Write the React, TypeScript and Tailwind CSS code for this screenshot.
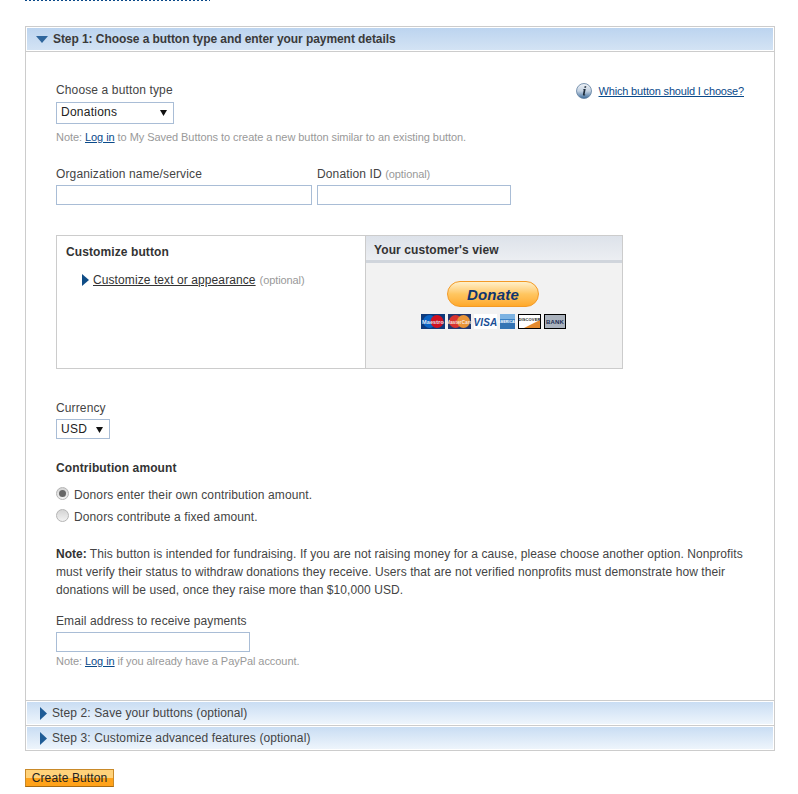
import React from "react";

const Down = () => (
  <svg width="12" height="7" viewBox="0 0 12 7" className="shrink-0">
    <path d="M0 0H12L6 7Z" fill="#2f669c" />
  </svg>
);
const Right = () => (
  <svg width="7" height="13" viewBox="0 0 7 13" className="shrink-0">
    <path d="M0 0L7 6.5L0 13Z" fill="#1f5c96" />
  </svg>
);

const Select = ({ value, className }: { value: string; className: string }) => (
  <div className={`flex items-center justify-between border border-[#a9bdd6] bg-white pl-[4px] pr-[6px] text-[#222] tracking-[0.25px] ${className}`}>
    <span>{value}</span>
    <svg width="7" height="7" viewBox="0 0 7 7"><path d="M0 1H7L3.5 7Z" fill="#111" /></svg>
  </div>
);

const Info = () => (
  <svg width="16" height="16" viewBox="0 0 16 16" className="shrink-0">
    <defs>
      <linearGradient id="ig" x1="0" y1="0" x2="0" y2="1">
        <stop offset="0" stopColor="#f1f4f8" />
        <stop offset="0.5" stopColor="#c4d2e2" />
        <stop offset="1" stopColor="#3d6c9b" />
      </linearGradient>
    </defs>
    <circle cx="8" cy="8" r="7.5" fill="url(#ig)" stroke="#5f7f9f" strokeWidth="0.8" />
    <path d="M8.6 3.2h1.7l-.3 1.5H8.3ZM7.9 6h1.8l-1.1 5.2c-.1.4.2.5.7.3l-.2.7c-1 .5-2.3.5-2.2-.7l.8-4.4-.8-.1Z" fill="#1d2b3a" />
  </svg>
);

const Radio = ({ on }: { on?: boolean }) => (
  <span className="flex items-center justify-center w-[13px] h-[13px] -mt-[3px] rounded-full border border-[#b5b5b5] bg-linear-to-b from-[#d4d4d4] to-[#f2f2f2] shrink-0">
    {on && <span className="block w-[7px] h-[7px] rounded-full bg-[#666]" />}
  </span>
);

const Cards = () => (
  <svg width="146" height="16" viewBox="0 0 146 16" className="block">
    <rect x="0" y="0" width="24" height="15" fill="#0d3a7c" />
    <circle cx="8.5" cy="7.5" r="6.5" fill="#0a63c4" />
    <circle cx="16" cy="7.5" r="6.5" fill="#cf1020" />
    <text x="12" y="9.5" fontSize="5.5" fontWeight="700" fill="#dfe8f5" textAnchor="middle" fontFamily="Liberation Sans">Maestro</text>
    <rect x="27" y="0" width="23" height="15" fill="#22386f" />
    <circle cx="34.5" cy="7.5" r="6.5" fill="#d8332f" />
    <circle cx="42.5" cy="7.5" r="6.5" fill="#e89437" />
    <text x="38.5" y="9.5" fontSize="4.6" fontWeight="700" fill="#f5e6e0" textAnchor="middle" fontFamily="Liberation Sans">MasterCard</text>
    <rect x="53" y="0" width="23" height="15" fill="#ffffff" />
    <text x="64.5" y="11.5" fontSize="10" fontWeight="700" fontStyle="italic" fill="#1a4f96" textAnchor="middle" fontFamily="Liberation Sans">VISA</text>
    <rect x="79" y="0" width="15" height="15" fill="#3b82c6" />
    <rect x="79" y="0" width="15" height="5" fill="#7db3e2" />
    <rect x="79" y="9" width="15" height="6" fill="#3474b4" />
    <text x="86.5" y="8.5" fontSize="3.4" fontWeight="700" fill="#ffffff" textAnchor="middle" fontFamily="Liberation Sans">AMERICAN</text>
    <rect x="97.5" y="0.5" width="22" height="14" fill="#ffffff" stroke="#000" />
    <path d="M103 14L119 6V14Z" fill="#e58a2d" />
    <text x="108.5" y="6.5" fontSize="4" fontWeight="700" fill="#222" textAnchor="middle" fontFamily="Liberation Sans">DISCOVER</text>
    <rect x="123.5" y="0.5" width="21" height="14" fill="#aab2bd" stroke="#000" />
    <text x="134" y="9.8" fontSize="6" fontWeight="700" fill="#1e2f55" textAnchor="middle" fontFamily="Liberation Sans">BANK</text>
  </svg>
);

const Lnk = ({ children }: { children: React.ReactNode }) => (
  <a className="text-[#0a4a8a] underline">{children}</a>
);

const Field = ({ className }: { className: string }) => (
  <input className={`block h-[20px] border border-[#a9bdd6] bg-white ${className}`} />
);

const Collapsed = ({ label }: { label: string }) => (
  <div className="p-[1px] border-t border-[#ccc] h-[25px]">
    <div className="h-full flex items-center gap-[5px] pl-[13px] bg-linear-to-b from-[#c9ddf3] to-[#eef5fc] text-[#444] tracking-[0.11px]">
      <Right />
      <span>{label}</span>
    </div>
  </div>
);

export default function App() {
  return (
    <div className="w-[798px] h-[794px] bg-white overflow-hidden font-['Liberation_Sans',Arial,sans-serif] text-[12px] leading-[18px] text-[#444]">
      <div className="ml-[25px] w-[185px] h-px bg-[repeating-linear-gradient(90deg,#0a4a8a_0,#0a4a8a_2px,transparent_2px,transparent_4px)]" />
      <div className="ml-[25px] mt-[25px] w-[750px] border border-[#ccc]">
        <div className="p-[1px] border-b border-[#ccc] h-[25px]">
          <div className="h-full flex items-center gap-[5px] pl-[9px] bg-linear-to-b from-[#bcd4ef] to-[#d3e3f4] font-bold text-[#3a3a3a] tracking-[-0.07px]">
            <Down />
            <span>Step 1: Choose a button type and enter your payment details</span>
          </div>
        </div>

        <div className="px-[30px] pt-[29px] h-[648px] tracking-[0.13px]">
          <div className="flex justify-between">
            <div>
              <div className="h-[18px]">Choose a button type</div>
              <Select value="Donations" className="w-[118px] h-[22px] mt-[3px] pb-[2px]" />
            </div>
            <div className="flex items-center gap-[7px] h-[20px] text-[11px] tracking-[-0.17px]">
              <Info />
              <Lnk>Which button should I choose?</Lnk>
            </div>
          </div>
          <div className="mt-[4px] text-[11px] text-[#999] tracking-[-0.06px]">
            Note: <Lnk>Log in</Lnk> to My Saved Buttons to create a new button similar to an existing button.
          </div>

          <div className="flex gap-[5px] mt-[19px]">
            <div>
              <div className="h-[18px]">Organization name/service</div>
              <Field className="w-[256px] mt-[2px]" />
            </div>
            <div>
              <div className="h-[18px]">
                Donation ID <span className="text-[11px] text-[#999] tracking-[-0.1px]">(optional)</span>
              </div>
              <Field className="w-[194px] mt-[2px]" />
            </div>
          </div>

          <div className="flex mt-[30px] w-[567px] h-[134px] border border-[#ccc]">
            <div className="w-[309px] border-r border-[#ccc] px-[9px] pt-[7px]">
              <div className="font-bold text-[#333] tracking-[0.1px]">Customize button</div>
              <div className="flex items-center mt-[10px] pl-[16px] gap-[4px]">
                <svg width="7" height="12" viewBox="0 0 7 12" className="shrink-0"><path d="M0 0L7 6L0 12Z" fill="#0f4c86" /></svg>
                <span className="text-[#333] underline tracking-[0.09px]">Customize text or appearance</span>
                <span className="text-[11px] text-[#999] tracking-[-0.1px]">(optional)</span>
              </div>
            </div>
            <div className="flex-1 bg-[#f2f2f2]">
              <div className="h-[27px] bg-linear-to-b from-[#dde2ea] to-[#eceef2] border-b-[3px] border-[#d0d5dc] font-bold text-[#333] pl-[8px] pt-[5px] tracking-[0.1px]">
                Your customer's view
              </div>
              <div className="flex flex-col items-center pt-[18px]">
                <div className="w-[92px] h-[26px] mr-[2px] rounded-[13px] border border-[#f39a26] bg-linear-to-b from-[#fff0c8] via-[#ffc660] to-[#ffa928] flex items-center justify-center font-bold italic text-[#10356f] text-[15px] tracking-[0.2px] leading-none">
                  Donate
                </div>
                <div className="mt-[7px]"><Cards /></div>
              </div>
            </div>
          </div>

          <div className="mt-[30px] h-[18px]">Currency</div>
          <Select value="USD" className="w-[54px] h-[20px] mt-[2px]" />

          <div className="mt-[20px] font-bold text-[#333] tracking-[0.1px]">Contribution amount</div>
          <div className="mt-[9px] flex flex-col gap-[4px] tracking-[0.11px]">
            <label className="flex items-center gap-[5px] h-[18px]"><Radio on />Donors enter their own contribution amount.</label>
            <label className="flex items-center gap-[5px] h-[18px]"><Radio />Donors contribute a fixed amount.</label>
          </div>

          <div className="mt-[19px] w-[690px] tracking-[0.08px]">
            <b className="text-[#333] tracking-normal">Note:</b> This button is intended for fundraising. If you are not raising money for a cause, please choose another option. Nonprofits must verify their status to withdraw donations they receive. Users that are not verified nonprofits must demonstrate how their donations will be used, once they raise more than $10,000 USD.
          </div>

          <div className="mt-[13px] h-[18px] tracking-[0.12px]">Email address to receive payments</div>
          <Field className="w-[194px] mt-[2px]" />
          <div className="text-[11px] text-[#999] tracking-[-0.06px]">
            Note: <Lnk>Log in</Lnk> if you already have a PayPal account.
          </div>
        </div>

        <Collapsed label="Step 2: Save your buttons (optional)" />
        <Collapsed label="Step 3: Customize advanced features (optional)" />
      </div>

      <button className="block ml-[25px] mt-[18px] w-[89px] h-[18px] border border-[#c98a2a] border-b-[#a86a10] bg-linear-to-b from-[#ffd27a] from-50% to-[#ffa21a] to-50% text-[#222] text-[12px] leading-[15px] tracking-[0.12px]">
        Create Button
      </button>
    </div>
  );
}
